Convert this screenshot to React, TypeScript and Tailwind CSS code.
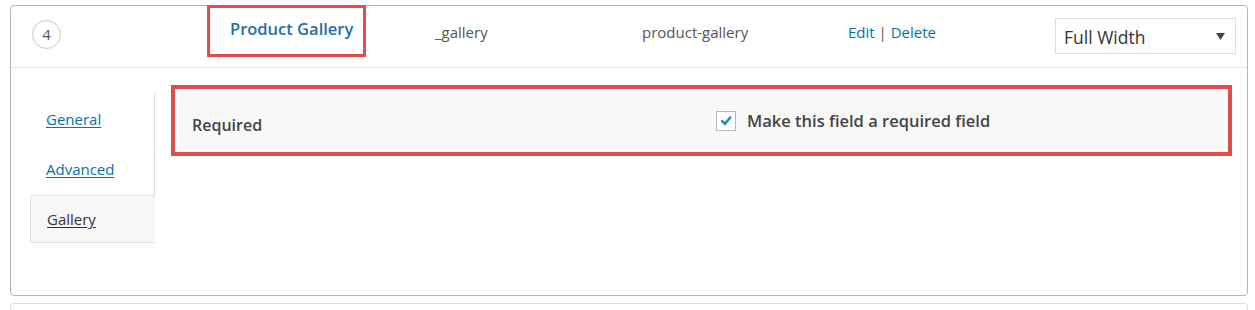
import React from 'react';

const font = { fontFamily: '"Open Sans", "Noto Sans", sans-serif' };

function Tab({ label, active }: { label: string; active?: boolean }) {
  return (
    <div
      className={
        'h-[48px] flex items-center pl-[16px] text-[15px] underline underline-offset-2 ' +
        (active
          ? 'bg-[#f7f7f7] border border-r-0 border-[#dedede] rounded-l-[3px] text-[#333] -mr-px'
          : 'text-[#0073aa]')
      }
    >
      {label}
    </div>
  );
}

export default function App() {
  return (
    <div className="bg-white h-[310px] pt-[5px] px-[10px] overflow-hidden" style={font}>
      <div className="w-[1238px] border border-[#b4b4b4] rounded-[4px]">
        {/* header row */}
        <div className="flex items-start h-[62px] border-b border-[#e5e5e5]">
          <div className="w-[196px] pl-[21px] mt-[14px]">
            <div className="w-[29px] h-[29px] rounded-full border border-[#c8c8c8] flex items-center justify-center text-[15px] text-[#555]">
              4
            </div>
          </div>
          <div className="w-[159px] h-[52px] -mt-[1px] border-[3px] border-[#e24c4b] flex items-center pl-[20px] pb-[4px] text-[16.5px] font-semibold text-[#1f6fa8]">
            Product Gallery
          </div>
          <div className="w-[69px]" />
          <div className="w-[207px] mt-[15px] text-[15px] text-[#555]">_gallery</div>
          <div className="w-[206px] mt-[15px] text-[15px] text-[#555]">product-gallery</div>
          <div className="w-[207px] mt-[15px] text-[15px] text-[#0073aa]">
            Edit <span className="text-[#555]">|</span> Delete
          </div>
          <div className="w-[181px] h-[36px] mt-[12px] border border-[#ddd] flex items-center justify-between pl-[8px] pr-[10px]">
            <span className="text-[17.5px] text-[#333] pt-[2px]">Full Width</span>
            <svg width="9" height="7" viewBox="0 0 9 7">
              <path d="M0 0h9L4.5 7z" fill="#444" />
            </svg>
          </div>
        </div>

        {/* body */}
        <div className="flex items-start h-[227px]">
          <div className="ml-[19px] mt-[25px] w-[125px] border-r border-[#dcdcdc] pt-[2px] pb-[1px] flex flex-col gap-[2px]">
            <Tab label="General" />
            <Tab label="Advanced" />
            <Tab label="Gallery" active />
          </div>
          <div className="ml-[16px] mt-[17px] w-[1061px] h-[71px] border-[4px] border-[#e24c4b] pt-[4px] px-[4px]">
            <div className="h-[58px] bg-[#f8f8f8] flex items-start">
              <div className="w-[537px] pl-[13px] mt-[20px] text-[16px] font-semibold text-[#444]">Required</div>
              <div className="flex items-center mt-[16px]">
                <div className="w-[20px] h-[20px] border border-[#b4b9be] bg-white flex items-center justify-center">
                  <svg width="16" height="16" viewBox="0 0 16 16">
                    <path d="M2.5 8.2l1.8-1.8 2.6 2.7 5-6.2 1.9 1.6-6.8 8.3z" fill="#1e8cbe" />
                  </svg>
                </div>
                <span className="ml-[11px] text-[16.5px] font-semibold text-[#444]">
                  Make this field a required field
                </span>
              </div>
            </div>
          </div>
        </div>
      </div>

      {/* next card peeking */}
      <div className="w-[1238px] h-[7px] mt-[7px] border border-b-0 border-[#dcdcdc] rounded-t-[4px]" />
    </div>
  );
}
